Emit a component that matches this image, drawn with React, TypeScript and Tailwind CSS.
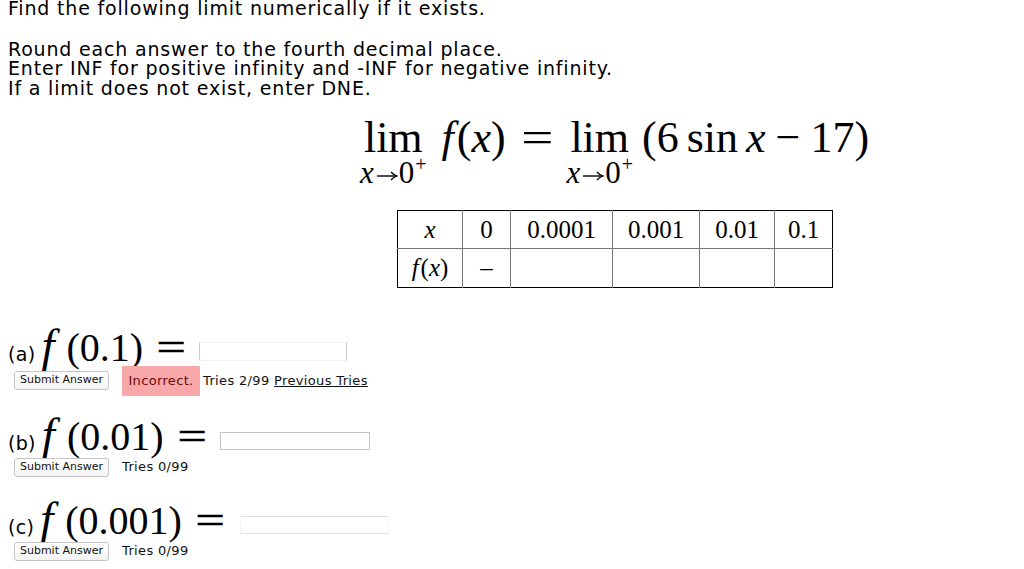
import React from "react";

const sans = { fontFamily: '"DejaVu Sans", Verdana, sans-serif' };
const serif = { fontFamily: '"Liberation Serif", "Times New Roman", serif' };

function Arrow() {
  return (
    <svg width="21" height="12" viewBox="0 0 21 12" className="mx-[1px]" aria-hidden="true">
      <line x1="0" y1="6" x2="19" y2="6" stroke="black" strokeWidth="1.4" />
      <path d="M14 2 Q16.5 5 20 6 Q16.5 7 14 10" fill="none" stroke="black" strokeWidth="1.3" />
    </svg>
  );
}

function Sub() {
  return (
    <div className="mt-[-3px] flex items-baseline text-[31px] leading-[31px]">
      <span className="italic mr-[2px]">x</span>
      <span className="self-center mt-[4px]">
        <Arrow />
      </span>
      <span>0</span>
      <span className="text-[20px] relative -top-[12px] ml-[1px]">+</span>
    </div>
  );
}

function Lim() {
  return (
    <div className="flex flex-col items-center">
      <div className="text-[44px] leading-[44px]">lim</div>
      <Sub />
    </div>
  );
}

function Question({
  label,
  arg,
  inputClass,
  status,
  rowMt,
  btnRowH,
}: {
  label: string;
  arg: string;
  inputClass: string;
  status: React.ReactNode;
  rowMt: string;
  btnRowH: string;
}) {
  return (
    <div className={rowMt}>
      <div className="flex items-baseline h-[40px] pl-[8px]">
        <span className="text-[19px] leading-[20px] tracking-[0.3px]" style={sans}>
          ({label})
        </span>
        <span className="text-[40px] leading-[40px] ml-[6px]" style={serif}>
          <span className="italic text-[47px] leading-[40px]">f</span>
          <span className="ml-[12px]">({arg})</span>
          <span className="inline-block ml-[17px] mr-[3px] scale-x-[1.3] [-webkit-text-stroke:0.6px_black]">=</span>
        </span>
        <div className={inputClass}></div>
      </div>
      <div className={`flex items-center ${btnRowH}`} style={sans}>
        <div className="ml-[14px] w-[95px] h-[19px] border border-[#c6c6c6] rounded-[3px] bg-gradient-to-b from-white to-[#f4f4f4] flex items-center justify-center text-[11px] text-[#111]">
          Submit Answer
        </div>
        {status}
      </div>
    </div>
  );
}

export default function App() {
  return (
    <div className="w-[1024px] h-[569px] overflow-hidden bg-white text-black">
      <div style={sans} className="text-[19px] leading-[19.5px] tracking-[0.82px] pl-[8px]">
        <div className="mt-[-1.5px]">Find the following limit numerically if it exists.</div>
        <div className="mt-[21.5px]">
          <div>Round each answer to the fourth decimal place.</div>
          <div>Enter INF for positive infinity and -INF for negative infinity.</div>
          <div>If a limit does not exist, enter DNE.</div>
        </div>
      </div>

      <div style={serif} className="mt-[17.5px] ml-[360px] flex items-baseline">
        <Lim />
        <span className="text-[44px] leading-[44px] ml-[15px]">
          <span className="italic">f</span>
          <span className="ml-[3px]">(</span>
          <span className="italic">x</span>)
        </span>
        <span className="inline-block text-[44px] leading-[44px] ml-[19px] mr-[3px] scale-x-[1.3]">=</span>
        <div className="ml-[14px]">
          <Lim />
        </div>
        <span className="text-[44px] leading-[44px] ml-[9px]">
          (6<span className="ml-[8px]">sin</span>
          <span className="italic ml-[8px]">x</span>
          <span className="ml-[10px]">−</span>
          <span className="ml-[10px]">17)</span>
        </span>
      </div>

      <div className="mt-[18px] ml-[397px]" style={serif}>
        <table className="border-collapse border border-black text-[25px]">
          <tbody>
            <tr className="h-[36px]">
              <td className="w-[65px] border-r border-b border-[#777] text-center italic">x</td>
              <td className="w-[48px] border-r border-b border-[#777] text-center">0</td>
              <td className="w-[102px] border-r border-b border-[#777] text-center">0.0001</td>
              <td className="w-[87px] border-r border-b border-[#777] text-center">0.001</td>
              <td className="w-[75px] border-r border-b border-[#777] text-center">0.01</td>
              <td className="w-[58px] border-b border-[#777] text-center">0.1</td>
            </tr>
            <tr className="h-[38px]">
              <td className="border-r border-[#777] text-center">
                <span className="italic">f</span>
                <span className="ml-[2px]">(</span>
                <span className="italic">x</span>)
              </td>
              <td className="border-r border-[#777] text-center">–</td>
              <td className="border-r border-[#777]"></td>
              <td className="border-r border-[#777]"></td>
              <td className="border-r border-[#777]"></td>
              <td></td>
            </tr>
          </tbody>
        </table>
      </div>

      <Question
        label="a"
        arg="0.1"
        inputClass="ml-[13px] w-[148px] h-[19px] border-x border-x-[#cccccc] border-y border-y-[#f2f2f2]"
        rowMt="mt-[37px]"
        btnRowH="h-[30px] mt-[1px]"
        status={
          <>
            <div className="ml-[13px] w-[78px] h-[30px] bg-[#f8a8a8] text-[#6e0a0a] text-[13px] tracking-[0.35px] flex items-center justify-center">
              Incorrect.
            </div>
            <span className="ml-[3px] text-[13px] tracking-[0.35px] text-[#111]">
              Tries 2/99 <span className="underline">Previous Tries</span>
            </span>
          </>
        }
      />
      <Question
        label="b"
        arg="0.01"
        inputClass="ml-[14px] w-[150px] h-[18px] border border-[#c4c4c4]"
        rowMt="mt-[18.5px]"
        btnRowH="h-[26px]"
        status={<span className="ml-[13px] text-[13px] tracking-[0.35px] text-[#111]">Tries 0/99</span>}
      />
      <Question
        label="c"
        arg="0.001"
        inputClass="ml-[16px] w-[149px] h-[18px] border-y border-y-[#e0e0e0] border-x border-x-[#f4f4f4]"
        rowMt="mt-[18px]"
        btnRowH="h-[26px]"
        status={<span className="ml-[13px] text-[13px] tracking-[0.35px] text-[#111]">Tries 0/99</span>}
      />
    </div>
  );
}
